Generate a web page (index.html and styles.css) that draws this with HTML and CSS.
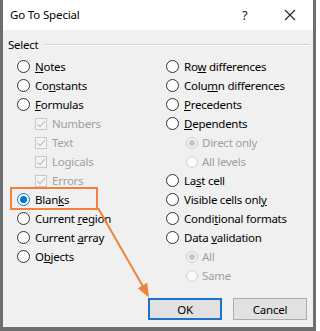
FILE: index.html
```html
<!DOCTYPE html>
<html>
<head>
<meta charset="utf-8">
<link rel="stylesheet" href="styles.css">
</head>
<body>
<div class="dialog">
  <div class="titlebar">
    <span class="title">Go To Special</span>
    <span class="help">?</span>
    <svg class="close" width="12" height="12" viewBox="0 0 12 12"><path d="M1 1 L11 11 M11 1 L1 11" stroke="#222" stroke-width="1.1" fill="none"/></svg>
  </div>
  <div class="body">
    <div class="group-head"><span>Select</span><div class="rule"></div></div>
    <div class="columns">
      <div class="col">
        <div class="row"><span class="radio"></span><span><u>N</u>otes</span></div>
        <div class="row"><span class="radio"></span><span>Co<u>n</u>stants</span></div>
        <div class="row"><span class="radio"></span><span><u>F</u>ormulas</span></div>
        <div class="row sub-l dis"><span class="check"><svg width="12" height="12" viewBox="0 0 12 12"><path d="M2.5 6.2 L5 8.7 L9.8 3.3" stroke="#c4c4c4" stroke-width="1.3" fill="none"/></svg></span><span>Numbers</span></div>
        <div class="row sub-l dis"><span class="check"><svg width="12" height="12" viewBox="0 0 12 12"><path d="M2.5 6.2 L5 8.7 L9.8 3.3" stroke="#c4c4c4" stroke-width="1.3" fill="none"/></svg></span><span>Text</span></div>
        <div class="row sub-l dis"><span class="check"><svg width="12" height="12" viewBox="0 0 12 12"><path d="M2.5 6.2 L5 8.7 L9.8 3.3" stroke="#c4c4c4" stroke-width="1.3" fill="none"/></svg></span><span>Logicals</span></div>
        <div class="row sub-l dis"><span class="check"><svg width="12" height="12" viewBox="0 0 12 12"><path d="M2.5 6.2 L5 8.7 L9.8 3.3" stroke="#c4c4c4" stroke-width="1.3" fill="none"/></svg></span><span>Errors</span></div>
        <div class="row"><span class="radio on"></span><span>Blan<u>k</u>s</span></div>
        <div class="row"><span class="radio"></span><span>Current <u>r</u>egion</span></div>
        <div class="row"><span class="radio"></span><span>Current <u>a</u>rray</span></div>
        <div class="row"><span class="radio"></span><span>O<u>b</u>jects</span></div>
      </div>
      <div class="col">
        <div class="row"><span class="radio"></span><span>Ro<u>w</u> differences</span></div>
        <div class="row"><span class="radio"></span><span>Colu<u>m</u>n differences</span></div>
        <div class="row"><span class="radio"></span><span><u>P</u>recedents</span></div>
        <div class="row"><span class="radio"></span><span><u>D</u>ependents</span></div>
        <div class="row sub-r dis"><span class="radio sm dis-on"></span><span>Direct only</span></div>
        <div class="row sub-r dis"><span class="radio sm dis-off"></span><span>All levels</span></div>
        <div class="row"><span class="radio"></span><span>La<u>s</u>t cell</span></div>
        <div class="row"><span class="radio"></span><span>Visible cells onl<u>y</u></span></div>
        <div class="row"><span class="radio"></span><span>Condi<u>t</u>ional formats</span></div>
        <div class="row"><span class="radio"></span><span>Data <u>v</u>alidation</span></div>
        <div class="row sub-r dis"><span class="radio sm dis-on"></span><span>All</span></div>
        <div class="row sub-r dis"><span class="radio sm dis-off"></span><span>Same</span></div>
      </div>
    </div>
    <div class="footer">
      <div class="btn ok">OK</div>
      <div class="btn">Cancel</div>
    </div>
  </div>
  <div class="highlight"></div>
  <svg class="arrow" width="316" height="331" viewBox="0 0 316 331">
    <line x1="98" y1="208" x2="143" y2="286.5" stroke="#f0823c" stroke-width="2"/>
    <polygon points="149,297.5 137.8,288.2 147.2,282.8" fill="#f0823c"/>
  </svg>
</div>
</body>
</html>
```
FILE: styles.css
```css
html, body {
  margin: 0;
  padding: 0;
}
body {
  font-family: "Noto Sans", "Open Sans", sans-serif;
  font-size: 11.5px;
  letter-spacing: -0.25px;
  color: #000;
}
.dialog {
  position: relative;
  width: 316px;
  height: 331px;
  box-sizing: border-box;
  border: 3px solid #6e6e6e;
  border-top: 0;
  border-bottom-width: 4px;
  background: #f0f0f0;
  display: flex;
  flex-direction: column;
}
.titlebar {
  height: 30px;
  background: #fff;
  display: flex;
  align-items: center;
  padding-left: 7px;
}
.title {
  font-size: 11.5px;
  letter-spacing: -0.15px;
  flex: 1;
  padding-bottom: 1px;
}
.help {
  font-size: 13px;
  width: 14px;
  margin-right: 28px;
  color: #222;
}
.close {
  margin-right: 17px;
}
.body {
  flex: 1;
  display: flex;
  flex-direction: column;
}
.group-head {
  display: flex;
  align-items: center;
  height: 17px;
  margin-top: 6px;
  padding-left: 5px;
  padding-right: 3px;
}
.rule {
  flex: 1;
  height: 1px;
  background: #d5d5d5;
  border-bottom: 1px solid #fff;
  margin-left: 6px;
}
.columns {
  display: grid;
  grid-template-columns: 149px 1fr;
  padding-left: 14px;
  margin-top: 4px;
}
.row {
  height: 19px;
  display: flex;
  align-items: center;
  gap: 5px;
  white-space: nowrap;
}
.sub-l {
  padding-left: 18px;
}
.sub-r {
  padding-left: 20px;
  gap: 4px;
}
.dis {
  color: #a0a0a0;
}
.radio {
  width: 13px;
  height: 13px;
  box-sizing: border-box;
  border: 1px solid #333;
  border-radius: 50%;
  background: #fff;
  flex: none;
  position: relative;
}
.radio.sm {
  width: 12px;
  height: 12px;
}
.radio.on {
  border-color: #0078d7;
}
.radio.on::after {
  content: "";
  position: absolute;
  left: 2px;
  top: 2px;
  width: 7px;
  height: 7px;
  border-radius: 50%;
  background: #0078d7;
}
.radio.dis-on {
  border-color: #c8c8c8;
  background: #f6f6f6;
}
.radio.dis-on::after {
  content: "";
  position: absolute;
  left: 2px;
  top: 2px;
  width: 6px;
  height: 6px;
  border-radius: 50%;
  background: #c4c4c4;
}
.radio.dis-off {
  border-color: #d0d0d0;
  background: #fafafa;
}
.check {
  width: 12px;
  height: 12px;
  box-sizing: border-box;
  border: 1px solid #c8c8c8;
  background: #f4f4f4;
  flex: none;
  display: flex;
  align-items: center;
  justify-content: center;
}
.check svg {
  flex: none;
}
.footer {
  display: flex;
  justify-content: flex-end;
  gap: 11px;
  padding-right: 6px;
  margin-top: 13px;
}
.btn {
  width: 74px;
  height: 22px;
  box-sizing: border-box;
  border: 1px solid #adadad;
  background: #e1e1e1;
  display: flex;
  align-items: center;
  justify-content: center;
}
.btn.ok {
  border: 2px solid #1d72c9;
}
.highlight {
  position: absolute;
  left: 7px;
  top: 187px;
  width: 88px;
  height: 23px;
  box-sizing: border-box;
  border: 2px solid #f0823c;
}
.arrow {
  position: absolute;
  left: -3px;
  top: 0;
  pointer-events: none;
}
```
